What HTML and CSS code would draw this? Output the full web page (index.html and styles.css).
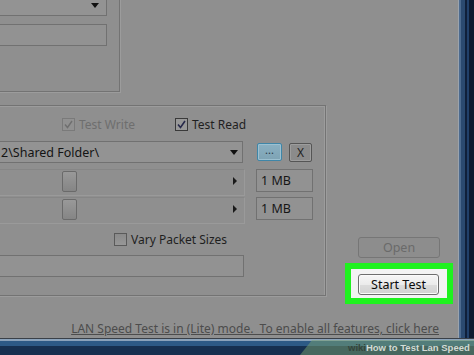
FILE: index.html
```html
<!DOCTYPE html>
<html>
<head>
<meta charset="utf-8">
<link rel="stylesheet" href="styles.css">
</head>
<body>
<div class="screen">
  <div class="win">
    <div class="win-body">
      <div class="client">
        <div class="grp1">
          <div class="combo"><span class="combo-text"></span><span class="down"></span></div>
          <div class="tbox"></div>
        </div>
        <div class="mid">
          <div class="grp2">
            <div class="checks">
              <label class="chk chk-dis"><span class="box"><svg viewBox="0 0 13 13" width="13" height="13"><path d="M3 6.5 L5.5 9.5 L10 3" fill="none" stroke="#6f6f6f" stroke-width="1.4"/></svg></span><span>Test Write</span></label>
              <label class="chk chk-on"><span class="box"><svg viewBox="0 0 13 13" width="13" height="13"><path d="M3 6.5 L5.5 9.5 L10 3" fill="none" stroke="#26284a" stroke-width="1.6"/></svg></span><span>Test Read</span></label>
            </div>
            <div class="grow">
              <div class="combo combo-path"><span class="combo-text">2\Shared Folder\</span><span class="down"></span></div>
              <div class="btns">
                <span class="btn btn-browse">...</span>
                <span class="btn btn-x">X</span>
              </div>
            </div>
            <div class="grow srow">
              <div class="track"><span class="thumb"></span><span class="right"></span></div>
              <div class="tbox tval">1 MB</div>
            </div>
            <div class="grow srow srow2">
              <div class="track"><span class="thumb"></span><span class="right"></span></div>
              <div class="tbox tval">1 MB</div>
            </div>
            <div class="vary">
              <label class="chk chk-off"><span class="box"></span><span>Vary Packet Sizes</span></label>
            </div>
            <div class="grow">
              <div class="tbox tlong"></div>
            </div>
          </div>
          <div class="side">
            <span class="btn btn-open">Open</span>
            <div class="hl">
              <span class="btn btn-start">Start Test</span>
            </div>
          </div>
        </div>
        <div class="foot"><span class="link">LAN Speed Test is in (Lite) mode.&nbsp; To enable all features, click here</span></div>
      </div>
      <div class="frame-r"></div>
    </div>
    <div class="frame-b"></div>
  </div>
  <div class="wm"><span class="wm-wiki">wiki</span><span class="wm-how">How to Test Lan Speed</span></div>
</div>
</body>
</html>
```
FILE: styles.css
```css
* { box-sizing: border-box; }
html, body { margin: 0; padding: 0; }
body {
  width: 474px;
  height: 355px;
  overflow: hidden;
  background: #10203a;
  font-family: "Noto Sans", "Open Sans", sans-serif;
  font-size: 12px;
  color: #1f1f1f;
}
.screen { position: relative; width: 474px; height: 355px; overflow: hidden; }
.win { display: flex; flex-direction: column; width: 474px; height: 355px; }
.win-body { display: flex; height: 338px; }
.client {
  width: 458px;
  height: 338px;
  background: #8f8f8f;
  overflow: hidden;
  display: flex;
  flex-direction: column;
}
.frame-r {
  width: 16px;
  background: linear-gradient(to right, #9aa3ad 0 1px, #4d6b8f 1px 3px, #2b4a70 3px 7px, #10203a 7px 9px, #21406a 9px 11px, #0e1b30 11px);
}
.frame-b {
  height: 17px;
  background: linear-gradient(to bottom, #3a4048 0 1px, #8aa2ba 1px 3px, #2d5a86 3px 8px, #163050 8px);
}

/* top group */
.grp1 {
  margin-left: -20px;
  margin-top: -10px;
  width: 140px;
  height: 102px;
  flex: none;
  border: 1px solid #737373;
  border-top: none;
  border-left: none;
  box-shadow: 1px 1px 0 #9c9c9c;
  padding: 4px 12px 0 0;
}
.combo {
  height: 22px;
  border: 1px solid #717171;
  background: #939393;
  display: flex;
  align-items: center;
  padding: 0 7px 0 0;
}
.combo-text { flex: 1; white-space: nowrap; overflow: hidden; }
.down {
  width: 0; height: 0;
  border-left: 4.5px solid transparent;
  border-right: 4.5px solid transparent;
  border-top: 5px solid #111;
}
.tbox {
  height: 22px;
  border: 1px solid #717171;
  background: #929292;
  margin-top: 8px;
}

/* middle */
.mid { display: flex; margin-top: 13px; flex: none; }
.grp2 {
  margin-left: -40px;
  width: 366px;
  height: 191px;
  border: 1px solid #737373;
  border-left: none;
  box-shadow: inset -1px 1px 0 #9c9c9c, 1px 1px 0 #9c9c9c;
  display: flex;
  flex-direction: column;
}
.checks {
  margin-top: 12px;
  height: 13px;
  display: flex;
  padding-left: 102px;
}
.chk { display: flex; align-items: center; gap: 4px; height: 13px; line-height: 13px; white-space: nowrap; }
.chk-dis { width: 113px; color: #6e6e6e; }
.box {
  width: 13px; height: 13px; flex: none;
  border: 1px solid #6c6c6c;
  background: #919191;
  display: block;
  position: relative;
}
.box svg { display: block; margin: -1px; }
.chk-on .box { border-color: #3a3a3a; background: #989898; }
.chk-dis .box { border-color: #7a7a7a; }
.chk-off .box { border-color: #5a5a5a; background: linear-gradient(#8a8a8a, #979797); }

.grow {
  display: grid;
  grid-template-columns: 283px 57px;
  column-gap: 13px;
  align-items: center;
}
.grp2 > .grow:nth-child(2) { margin-top: 10px; }
.combo-path { padding-left: 40px; color: #141414; font-size: 12.5px; padding-right: 4px; }
.btns { display: flex; gap: 7px; padding-left: 1px; }
.btn {
  display: flex; align-items: center; justify-content: center;
  white-space: nowrap;
}
.btn-browse {
  width: 25px; height: 18px;
  border: 1px solid #3f86a8;
  border-radius: 2px;
  background: linear-gradient(#8ab0c2, #7ea3b4);
  box-shadow: inset 0 0 0 1px #9cc0d0;
  color: #2a3a44;
  font-size: 11px;
  line-height: 1;
  padding-bottom: 4px;
}
.btn-x {
  width: 23px; height: 19px;
  border: 1px solid #555;
  border-radius: 2px;
  background: #8b8b8b;
  box-shadow: inset 0 0 0 1px #9d9d9d;
  color: #222;
  font-size: 12px;
}
.srow { margin-top: 6px; }
.srow2 { margin-top: 5px; }
.track {
  height: 27px;
  border-top: 1px solid #868686;
  border-bottom: 1px solid #9a9a9a;
  border-right: 1px solid #9a9a9a;
  width: 285px;
  display: flex;
  align-items: center;
  padding: 0 7px 3px 102px;
  margin-bottom: -4px;
}
.thumb {
  width: 15px; height: 21px;
  border: 1px solid #6a6a6a;
  border-radius: 2px;
  background: linear-gradient(#999, #858585);
}
.right {
  margin-left: auto;
  width: 0; height: 0;
  border-top: 4px solid transparent;
  border-bottom: 4px solid transparent;
  border-left: 4px solid #1a1a1a;
}
.tval {
  margin-top: 0;
  height: 23px;
  padding-left: 4px;
  display: flex; align-items: center;
  color: #161616;
  font-size: 12.5px;
}
.vary { margin-top: 13px; padding-left: 154px; height: 13px; }
.grp2 > .grow:last-child { margin-top: 9px; }
.tlong { margin-top: 0; width: 284px; }

.side {
  display: flex;
  flex-direction: column;
  padding-left: 32px;
}
.btn-open {
  margin-top: 132px;
  width: 82px; height: 21px;
  border: 1px solid #767676;
  border-radius: 3px;
  background: #8d8d8d;
  color: #6a6a6a;
  font-size: 12.5px;
}
.hl {
  margin-top: 5px;
  margin-left: -13px;
  width: 108px;
  height: 41px;
  border: 6px solid #1ff21f;
  background: #f3f3f3;
  padding: 5px 0 0 7px;
}
.btn-start {
  width: 81px; height: 21px;
  border: 1px solid #6e6e6e;
  border-radius: 3px;
  background: linear-gradient(#f6f6f6 0, #ebebeb 50%, #dcdcdc 51%, #d2d2d2 100%);
  box-shadow: inset 0 0 0 1px #fbfbfb;
  color: #0a0a0a;
  font-size: 12.5px;
}
.foot {
  margin-top: auto;
  padding: 0 19px 1px 0;
  text-align: right;
  line-height: 16px;
}
.link {
  color: #4c4c4c;
  text-decoration: underline;
  font-size: 12px;
  white-space: pre;
}

/* watermark overlay */
.wm {
  position: absolute;
  right: 0;
  bottom: 0;
  width: 174px;
  height: 15px;
  padding-left: 48px;
  background: rgba(120, 160, 110, 0.5);
  clip-path: polygon(12px 0, 100% 0, 100% 100%, 0 100%);
  font-family: "Liberation Sans", Arial, sans-serif;
  font-weight: bold;
  font-size: 9.5px;
  line-height: 16px;
  white-space: nowrap;
}
.wm-wiki { color: #34443a; }
.wm-how { color: rgba(235, 240, 235, 0.85); }
```
